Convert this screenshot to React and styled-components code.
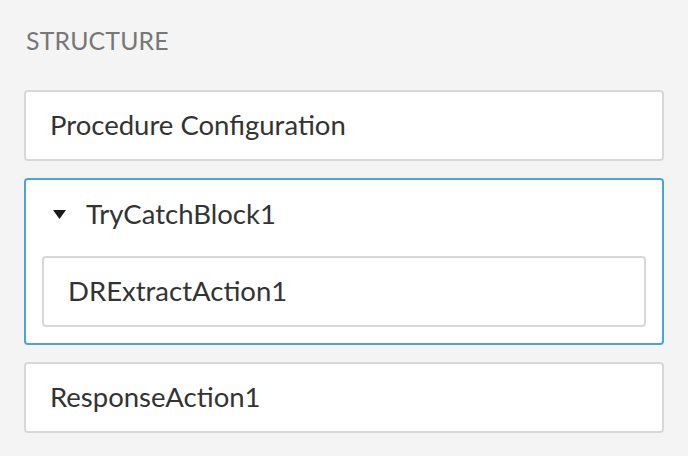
import styled, { createGlobalStyle } from "styled-components";

const GlobalStyle = createGlobalStyle`
  html, body {
    margin: 0;
    padding: 0;
    background: #f4f4f4;
  }
  body {
    font-family: Lato, "Open Sans", sans-serif;
  }
`;

const Panel = styled.div`
  width: 688px;
  height: 456px;
  box-sizing: border-box;
  padding: 24px 24px 0 24px;
  background: #f4f4f4;
`;

const Heading = styled.h2`
  margin: 0 0 0 2px;
  height: 66px;
  line-height: 33px;
  font-size: 24.8px;
  font-weight: 400;
  color: #777777;
  letter-spacing: 0.2px;
`;

const List = styled.div`
  display: flex;
  flex-direction: column;
  gap: 17px;
`;

const Node = styled.div`
  box-sizing: border-box;
  background: #fff;
  border: 2px solid ${(p) => (p.selected ? "#4ba3da" : "#d8d8d8")};
  border-radius: 4px;
  ${(p) => p.expanded && "padding: 0 16px 16px 16px;"}
`;

const Label = styled.div`
  height: 67px;
  box-sizing: border-box;
  display: flex;
  align-items: center;
  padding: 0 0 3px 24px;
  font-size: 27.5px;
  color: #333333;
`;

const GroupHead = styled.div`
  height: 68px;
  box-sizing: border-box;
  margin-bottom: 8px;
  display: flex;
  align-items: center;
  padding: 0 0 2px 11px;
  font-size: 27.5px;
  color: #333333;
`;

const Caret = styled.svg`
  width: 13px;
  height: 9px;
  margin: 2px 20px 0 0;
  flex-shrink: 0;
`;

export default function App() {
  return (
    <>
      <GlobalStyle />
      <Panel>
        <Heading>STRUCTURE</Heading>
        <List>
          <Node>
            <Label>Procedure Configuration</Label>
          </Node>
          <Node selected expanded>
            <GroupHead>
              <Caret viewBox="0 0 13 9">
                <path d="M0 0H13L6.5 9Z" fill="#1a1a1a" />
              </Caret>
              TryCatchBlock1
            </GroupHead>
            <Node>
              <Label>DRExtractAction1</Label>
            </Node>
          </Node>
          <Node>
            <Label>ResponseAction1</Label>
          </Node>
        </List>
      </Panel>
    </>
  );
}
